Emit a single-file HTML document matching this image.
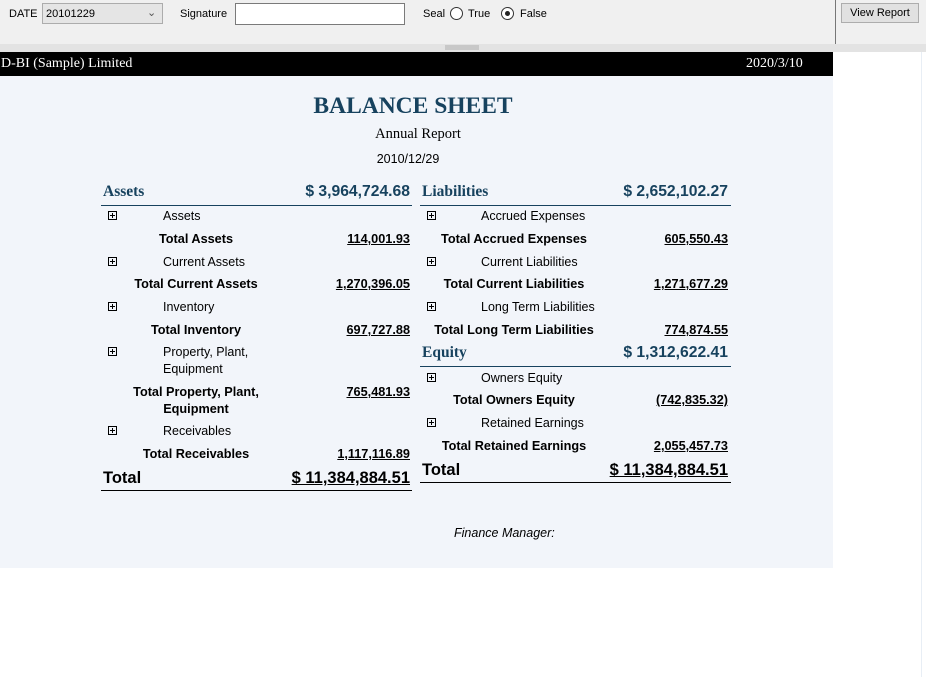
<!DOCTYPE html>
<html><head><meta charset="utf-8"><style>
*{margin:0;padding:0;box-sizing:border-box}
body{width:926px;height:677px;background:#fff;position:relative;overflow:hidden;font-family:"Liberation Sans","DejaVu Sans",sans-serif;font-size:12.5px;color:#000}
.a{position:absolute;white-space:nowrap;line-height:16px}
.t{font-size:11px}
.b{font-weight:bold;font-size:12.7px}
.c{text-align:center}
.r{text-align:right}
.u{text-decoration:underline}
.pb{position:absolute;width:9px;height:9px;border:1px solid #000;}
.pb:before{content:"";position:absolute;left:1px;top:3px;width:5px;height:1px;background:#000}
.pb:after{content:"";position:absolute;left:3px;top:1px;width:1px;height:5px;background:#000}
.h{font-family:"Liberation Serif",serif;font-weight:bold;color:#17425e;font-size:15.5px}
.hv{font-weight:bold;color:#17425e;font-size:15.7px}
.ln{position:absolute;height:1px;background:#17425e}
.lk{position:absolute;height:1px;background:#000}
</style></head><body>
<div style="position:absolute;left:0;top:0;width:926px;height:44px;background:#f0f0f0"></div>
<div class="a t" style="left:9px;top:6px">DATE</div>
<div style="position:absolute;left:42px;top:3px;width:121px;height:21px;background:#e5e5e5;border:1px solid #acacac"></div>
<div class="a t" style="left:46px;top:6px">20101229</div>
<div class="a t" style="left:147px;top:5px;color:#555">⌄</div>
<div class="a t" style="left:180px;top:6px">Signature</div>
<div style="position:absolute;left:235px;top:3px;width:170px;height:22px;background:#fff;border:1px solid #7a7a7a"></div>
<div class="a t" style="left:423px;top:6px">Seal</div>
<div style="position:absolute;left:450px;top:7px;width:13px;height:13px;border:1px solid #333;border-radius:50%;background:#fff"></div>
<div class="a t" style="left:468px;top:6px">True</div>
<div style="position:absolute;left:501px;top:7px;width:13px;height:13px;border:1px solid #333;border-radius:50%;background:#fff"></div>
<div style="position:absolute;left:505px;top:11px;width:5px;height:5px;border-radius:50%;background:#222"></div>
<div class="a t" style="left:520px;top:6px">False</div>
<div style="position:absolute;left:835px;top:0;width:1px;height:44px;background:#777"></div>
<div style="position:absolute;left:841px;top:3px;width:78px;height:20px;background:#e1e1e1;border:1px solid #adadad"></div>
<div class="a t c" style="left:841px;top:5px;width:78px">View Report</div>
<div style="position:absolute;left:0;top:44px;width:926px;height:8px;background:#e3e3e3"></div>
<div style="position:absolute;left:445px;top:45px;width:34px;height:5px;background:#c8c8c8"></div>
<div style="position:absolute;left:921px;top:52px;width:1px;height:625px;background:#e8eef5"></div>
<div style="position:absolute;left:0;top:52px;width:833px;height:516px;background:#f2f5fa"></div>
<div style="position:absolute;left:0;top:52px;width:833px;height:24px;background:#000"></div>
<div class="a" style="left:1px;top:56px;color:#fff;font-family:'Liberation Serif',serif;font-size:14px">D-BI (Sample) Limited</div>
<div class="a" style="left:746px;top:56px;color:#fff;font-family:'Liberation Serif',serif;font-size:14px">2020/3/10</div>
<div class="a c" style="left:0;width:826px;top:93px;line-height:26px;font-family:'Liberation Serif',serif;font-weight:bold;font-size:23.5px;color:#17425e">BALANCE SHEET</div>
<div class="a c" style="left:0;width:836px;top:126px;font-family:'Liberation Serif',serif;font-size:14.5px">Annual Report</div>
<div class="a c" style="left:0;width:816px;top:151px">2010/12/29</div>

<div class="a h" style="left:103px;top:184px">Assets</div>
<div class="a hv r" style="left:250px;width:160px;top:184px">$ 3,964,724.68</div>
<div class="ln" style="left:101px;top:205px;width:311px"></div>
<div class="a h" style="left:422px;top:184px">Liabilities</div>
<div class="a hv r" style="left:568px;width:160px;top:184px">$ 2,652,102.27</div>
<div class="ln" style="left:420px;top:205px;width:311px"></div>

<div class="pb" style="left:108px;top:211px"></div><div class="a" style="left:163px;top:208px">Assets</div>
<div class="a b c" style="left:121px;width:150px;top:231px">Total Assets</div><div class="a b u r" style="left:300px;width:110px;top:231px">114,001.93</div>
<div class="pb" style="left:108px;top:257px"></div><div class="a" style="left:163px;top:254px">Current Assets</div>
<div class="a b c" style="left:121px;width:150px;top:276px">Total Current Assets</div><div class="a b u r" style="left:300px;width:110px;top:276px">1,270,396.05</div>
<div class="pb" style="left:108px;top:302px"></div><div class="a" style="left:163px;top:299px">Inventory</div>
<div class="a b c" style="left:121px;width:150px;top:322px">Total Inventory</div><div class="a b u r" style="left:300px;width:110px;top:322px">697,727.88</div>
<div class="pb" style="left:108px;top:347px"></div><div class="a" style="left:163px;top:344px;line-height:17px">Property, Plant,<br>Equipment</div>
<div class="a b c" style="left:121px;width:150px;top:384px;line-height:17px">Total Property, Plant,<br>Equipment</div><div class="a b u r" style="left:300px;width:110px;top:384px">765,481.93</div>
<div class="pb" style="left:108px;top:426px"></div><div class="a" style="left:163px;top:423px">Receivables</div>
<div class="a b c" style="left:121px;width:150px;top:446px">Total Receivables</div><div class="a b u r" style="left:300px;width:110px;top:446px">1,117,116.89</div>
<div class="a b" style="left:103px;top:469px;font-size:16.5px;line-height:18px">Total</div><div class="a b u r" style="left:250px;width:160px;top:469px;font-size:16.5px;line-height:18px">$ 11,384,884.51</div>
<div class="lk" style="left:101px;top:490px;width:311px"></div>

<div class="pb" style="left:427px;top:211px"></div><div class="a" style="left:481px;top:208px">Accrued Expenses</div>
<div class="a b c" style="left:434px;width:160px;top:231px">Total Accrued Expenses</div><div class="a b u r" style="left:618px;width:110px;top:231px">605,550.43</div>
<div class="pb" style="left:427px;top:257px"></div><div class="a" style="left:481px;top:254px">Current Liabilities</div>
<div class="a b c" style="left:434px;width:160px;top:276px">Total Current Liabilities</div><div class="a b u r" style="left:618px;width:110px;top:276px">1,271,677.29</div>
<div class="pb" style="left:427px;top:302px"></div><div class="a" style="left:481px;top:299px">Long Term Liabilities</div>
<div class="a b c" style="left:424px;width:180px;top:322px">Total Long Term Liabilities</div><div class="a b u r" style="left:618px;width:110px;top:322px">774,874.55</div>
<div class="a h" style="left:422px;top:345px">Equity</div>
<div class="a hv r" style="left:568px;width:160px;top:345px">$ 1,312,622.41</div>
<div class="ln" style="left:420px;top:366px;width:311px"></div>
<div class="pb" style="left:427px;top:373px"></div><div class="a" style="left:481px;top:370px">Owners Equity</div>
<div class="a b c" style="left:434px;width:160px;top:392px">Total Owners Equity</div><div class="a b u r" style="left:618px;width:110px;top:392px">(742,835.32)</div>
<div class="pb" style="left:427px;top:418px"></div><div class="a" style="left:481px;top:415px">Retained Earnings</div>
<div class="a b c" style="left:434px;width:160px;top:438px">Total Retained Earnings</div><div class="a b u r" style="left:618px;width:110px;top:438px">2,055,457.73</div>
<div class="a b" style="left:422px;top:461px;font-size:16.5px;line-height:18px">Total</div><div class="a b u r" style="left:568px;width:160px;top:461px;font-size:16.5px;line-height:18px">$ 11,384,884.51</div>
<div class="lk" style="left:420px;top:482px;width:311px"></div>

<div class="a" style="left:454px;top:525px;font-style:italic">Finance Manager:</div>
</body></html>
